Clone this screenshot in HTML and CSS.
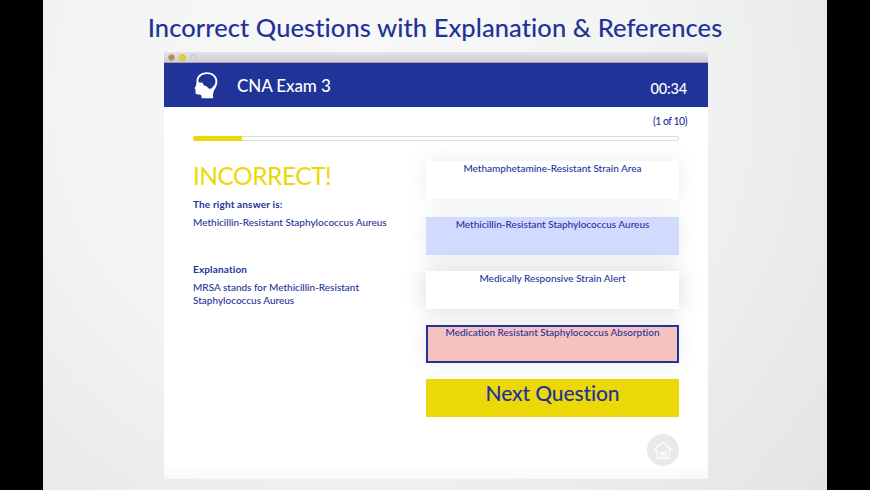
FILE: index.html
```html
<!DOCTYPE html>
<html lang="en">
<head>
    <meta charset="UTF-8">
    <meta name="viewport" content="width=device-width, initial-scale=1.0">
    <title>CNA Exam 3</title>
    <link rel="stylesheet" href="styles.css">
</head>
<body>
    <div class="stage">
        <h1 class="page-title">Incorrect Questions with Explanation &amp; References</h1>

        <div class="window">
            <div class="title-bar">
                <span class="dot dot-close"></span>
                <span class="dot dot-minimize"></span>
                <span class="dot dot-zoom"></span>
            </div>

            <header class="exam-header">
                <svg class="logo" width="24" height="27" viewBox="0 0 24 27">
                    <path fill="#fff" d="M13 0.3C6.500 0.300 2.500 4 2.500 9C2.500 11.500 2.400 12.500 1.900 13.600L0.700 16.200C0.500 16.900 1.500 17.200 1.500 17.600L1.400 20C1.400 21.500 2.200 22.300 3.800 22.500L6 22.600C7.400 22.900 7.600 24 7.600 26.200H19.200C18.700 22.500 19.200 19.500 20.900 17C22.400 14.800 23.300 12.500 23.300 9.500C23.300 4.300 19 0.300 13 0.300Z"/>
                    <path fill="#1f3399" d="M13.200 2C8.300 2 4.600 4.800 4.400 8.800C4.300 10.300 5.500 11 7.200 10.600C8.800 10.400 9 11.800 9.700 13C10.600 14.500 12.600 13.600 13.400 15C14.200 16.500 15.500 17.200 16.900 16.600C18 16 18.500 15.200 19.300 14.200C20.600 12.700 21.400 11.600 21.400 9.400C21.400 5.200 17.700 2 13.200 2Z"/>
                </svg>
                <span class="exam-name">CNA Exam 3</span>
                <span class="timer">00:34</span>
            </header>

            <main class="exam-body">
                <div class="counter">(1 of 10)</div>
                <div class="progress">
                    <div class="progress-fill" style="width: 10%;"></div>
                </div>

                <div class="columns">
                    <section class="feedback">
                        <h2 class="verdict">INCORRECT!</h2>
                        <h3 class="label">The right answer is:</h3>
                        <p class="text text-answer">Methicillin-Resistant Staphylococcus Aureus</p>
                        <h3 class="label">Explanation</h3>
                        <p class="text">MRSA stands for Methicillin-Resistant<br>Staphylococcus Aureus</p>
                    </section>

                    <section class="answers">
                        <div class="answer">Methamphetamine-Resistant Strain Area</div>
                        <div class="answer answer-right">Methicillin-Resistant Staphylococcus Aureus</div>
                        <div class="answer">Medically Responsive Strain Alert</div>
                        <div class="answer answer-wrong">Medication Resistant Staphylococcus Absorption</div>
                        <button class="next">Next Question</button>
                        <a class="home">
                            <svg width="18" height="19" viewBox="0 0 18 19" fill="none" stroke="#fff" stroke-width="1.1">
                                <path d="M1 8.500L9 1L17 8.500L15 9.300V17.500H3V9.300L1 8.500Z"/>
                                <path d="M6.500 17.500V11.500H11.500V17.500M9 11.500V17.500"/>
                            </svg>
                        </a>
                    </section>
                </div>
            </main>
        </div>
    </div>
</body>
</html>
```

FILE: styles.css
```css
* {
    box-sizing: border-box;
}
body {
    margin: 0;
    background: #000;
    font-family: 'Lato', sans-serif;
    font-variant-ligatures: none;
    color: #1f3399;
}
h1, h2, h3, p {
    margin: 0;
}
.stage {
    width: 784px;
    height: 490px;
    margin: 0 auto;
    padding-top: 10px;
    overflow: hidden;
    background: radial-gradient(circle at 40% 20%, #f9f9f9 0%, #f2f3f3 50%, #e2e4e5 100%);
}
.page-title {
    height: 42px;
    line-height: 34px;
    text-align: center;
    white-space: nowrap;
    font-size: 25.5px;
    font-weight: 500;
    letter-spacing: 0.08px;
}
.window {
    width: 544px;
    height: 427px;
    margin-left: 121px;
    overflow: hidden;
    background: #fff;
    border-radius: 2px;
}
/* Window chrome */
.title-bar {
    display: flex;
    align-items: center;
    gap: 4px;
    height: 11px;
    padding-left: 4px;
    background: linear-gradient(#e4e4e6, #cfcfd5);
    border-bottom: 1px solid #a9a0b8;
}
.dot {
    width: 7px;
    height: 7px;
    border-radius: 50%;
}
.dot-close {
    background: #b98d4a;
    border: 1px solid #cf9a80;
}
.dot-minimize {
    background: #ecd500;
    border: 1px solid #e0b25a;
}
.dot-zoom {
    background: #d8d8dc;
    border: 1px solid #c9c3cb;
}
.exam-header {
    display: flex;
    height: 44px;
    padding: 9px 21px 0 30px;
    background: #1f3399;
    color: #fff;
}
.exam-name {
    margin-left: 19px;
    line-height: 27px;
    font-size: 17px;
    font-weight: 500;
    letter-spacing: -0.1px;
}
.timer {
    margin-left: auto;
    line-height: 33px;
    font-size: 14.5px;
    font-weight: 500;
    letter-spacing: -0.15px;
}
.exam-body {
    height: 372px;
    padding: 7px 29px 0;
    background: linear-gradient(#fff 96%, #f8f8f8);
}
.counter {
    height: 22px;
    margin-right: -8px;
    line-height: 14px;
    text-align: right;
    font-size: 10.5px;
    font-weight: 500;
    letter-spacing: -0.5px;
}
.progress {
    height: 5px;
    overflow: hidden;
    border-radius: 3px;
    box-shadow: inset 0 0 0 1px #dcdcdc;
}
.progress-fill {
    height: 100%;
    background: #ecd806;
}
.columns {
    display: flex;
    justify-content: space-between;
    padding-top: 20px;
}
/* Left side */
.feedback {
    font-size: 10px;
    white-space: nowrap;
}
.verdict {
    height: 37px;
    line-height: 29px;
    font-size: 24.5px;
    font-weight: 400;
    letter-spacing: -0.5px;
    color: #ecd806;
}
.label {
    height: 18px;
    line-height: 13px;
    font-size: 10px;
    font-weight: 700;
    letter-spacing: 0.15px;
}
.text {
    line-height: 13px;
    font-weight: 500;
}
.text-answer {
    height: 47px;
}
/* Right side */
.answers {
    display: flex;
    flex-direction: column;
    width: 253px;
}
.answer {
    height: 38px;
    margin-bottom: 16px;
    line-height: 15px;
    text-align: center;
    white-space: nowrap;
    font-size: 10px;
    font-weight: 500;
    background: #fff;
    box-shadow: 0 0 20px rgba(50, 60, 60, 0.1);
}
.answer:first-child {
    margin-bottom: 18px;
}
.answer:nth-child(3) {
    box-shadow: 0 0 22px rgba(50, 60, 60, 0.2);
}
.answer-right {
    background: #d1daff;
}
.answer-wrong {
    line-height: 11px;
    background: #f6c2c0;
    border: 2px solid #1f3399;
}
.next {
    height: 38px;
    padding: 0 0 11px;
    border: none;
    background: #ecd806;
    color: #1f3399;
    font-family: inherit;
    font-size: 21px;
    font-weight: 500;
    letter-spacing: -0.1px;
}
.home {
    display: flex;
    align-items: center;
    justify-content: center;
    align-self: flex-end;
    width: 32px;
    height: 32px;
    margin-top: 17px;
    border-radius: 50%;
    background: #e9e9e9;
}
```
